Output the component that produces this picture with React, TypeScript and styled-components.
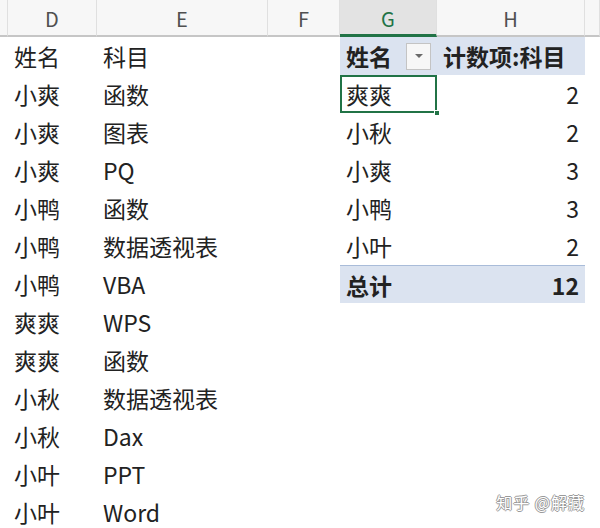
import React from 'react';
import styled, { createGlobalStyle } from 'styled-components';

const GlobalStyle = createGlobalStyle`
  * { margin: 0; padding: 0; box-sizing: border-box; }
  body { background: #fff; font-family: 'Noto Sans CJK SC', 'Noto Sans', sans-serif; overflow: hidden; }
`;

const Sheet = styled.div`
  position: relative; width: 600px; height: 528px; overflow: hidden;
  display: grid; grid-template-columns: 8px 89px 171px 72px 97px 148px 1fr;
  grid-template-rows: 37px; grid-auto-rows: 38px;
`;

const HeaderCell = styled.div<{ $active?: boolean }>`
  display: flex; align-items: center; justify-content: center;
  font-size: 20px; color: ${p => p.$active ? '#217346' : '#505050'};
  background: ${p => p.$active ? '#e3e3e3' : '#f7f7f7'};
  border-right: 1px solid #e0e0e0;
  border-bottom: ${p => p.$active ? '3px solid #217346' : '2px solid #c6c6c6'};
  padding-top: 2px;
`;

const Cell = styled.div<{ $align?: 'left' | 'right'; $bold?: boolean; $pivot?: boolean; $total?: boolean; $selected?: boolean }>`
  position: relative; display: flex; align-items: center;
  justify-content: ${p => p.$align === 'right' ? 'flex-end' : 'flex-start'};
  padding: 0 6px 0 6px; font-size: 23px; color: #222; white-space: nowrap;
  font-weight: ${p => p.$bold ? 700 : 400};
  background: ${p => p.$pivot ? '#dbe3f0' : 'transparent'};
  border-top: ${p => p.$total ? '1px solid #a9bcd9' : 'none'};
  box-shadow: ${p => p.$selected ? 'inset 0 0 0 2px #217346' : 'none'};
`;

const FillHandle = styled.span`
  position: absolute; right: -3px; bottom: -3px; width: 6px; height: 6px;
  background: #217346; border: 1px solid #fff;
`;

const DropButton = styled.span`
  margin-left: auto; width: 25px; height: 27px; border: 1px solid #c4c4c4;
  background: #f7f7f7; display: flex; align-items: center; justify-content: center;
`;

const Triangle = styled.span`
  width: 0; height: 0; border-left: 4px solid transparent; border-right: 4px solid transparent;
  border-top: 4px solid #6a6a6a;
`;

const Watermark = styled.div`
  position: absolute; right: 15px; bottom: 14px; font-size: 16px; letter-spacing: 1px;
  color: #fff;
  text-shadow: -1px 0 0 #9a9a9a, 1px 0 0 #9a9a9a, 0 -1px 0 #9a9a9a, 0 1px 0 #9a9a9a;
`;

const headers = ['', 'D', 'E', 'F', 'G', 'H', ''];

const data: [string, string][] = [
  ['姓名', '科目'], ['小爽', '函数'], ['小爽', '图表'], ['小爽', 'PQ'],
  ['小鸭', '函数'], ['小鸭', '数据透视表'], ['小鸭', 'VBA'], ['爽爽', 'WPS'],
  ['爽爽', '函数'], ['小秋', '数据透视表'], ['小秋', 'Dax'], ['小叶', 'PPT'], ['小叶', 'Word'],
];

const pivot: [string, number][] = [['爽爽', 2], ['小秋', 2], ['小爽', 3], ['小鸭', 3], ['小叶', 2]];

function App() {
  return (
    <>
      <GlobalStyle />
      <Sheet>
        {headers.map((h, i) => <HeaderCell key={i} $active={h === 'G'}>{h}</HeaderCell>)}
        {data.map(([name, subject], r) => {
          const pi = r - 1;
          let g: React.ReactNode = <Cell />;
          let h: React.ReactNode = <Cell />;
          if (r === 0) {
            g = <Cell $pivot $bold>姓名<DropButton><Triangle /></DropButton></Cell>;
            h = <Cell $pivot $bold>计数项:科目</Cell>;
          } else if (pi < pivot.length) {
            g = <Cell $selected={pi === 0}>{pivot[pi][0]}{pi === 0 && <FillHandle />}</Cell>;
            h = <Cell $align="right">{pivot[pi][1]}</Cell>;
          } else if (pi === pivot.length) {
            g = <Cell $pivot $total $bold>总计</Cell>;
            h = <Cell $pivot $total $bold $align="right">12</Cell>;
          }
          return (
            <React.Fragment key={r}>
              <Cell />
              <Cell>{name}</Cell>
              <Cell>{subject}</Cell>
              <Cell />
              {g}
              {h}
              <Cell />
            </React.Fragment>
          );
        })}
        <Watermark>知乎 @解藏</Watermark>
      </Sheet>
    </>
  );
}

export default App;
